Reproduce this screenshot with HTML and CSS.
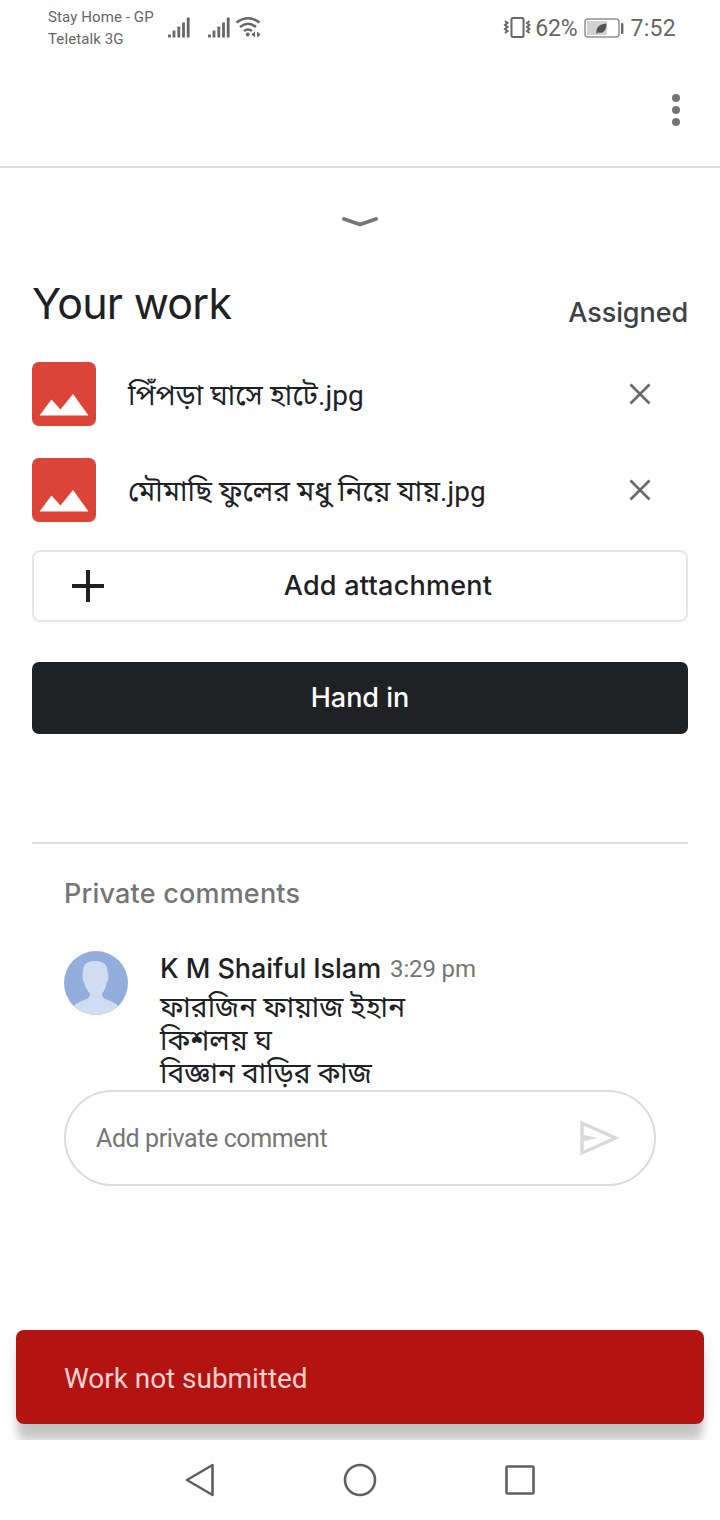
FILE: index.html
```html
<!DOCTYPE html>
<html lang="en">
<head>
<meta charset="utf-8">
<title>Your work</title>
<link rel="stylesheet" href="styles.css">
</head>
<body>
<div class="screen">
  <header class="status">
    <div class="carriers"><span class="carrier-a">Stay Home - GP</span><span class="carrier-b">Teletalk 3G</span></div>
    <svg class="signals" width="98" height="26" viewBox="0 0 98 26" fill="none" stroke="#666" stroke-width="2.800">
      <path d="M3.500 23.500v-3M8 23.500v-7M12.800 23.500v-11M17.500 23.500v-15M22.200 23.500v-20M43.500 23.500v-3M48 23.500v-7M52.800 23.500v-11M57.500 23.500v-15M62.200 23.500v-20"/>
      <path stroke-width="2.500" d="M70.500 8.500q11.500-8.500 23 0M74 13q8-6.500 16 0M78 17q4-3 8 0"/>
      <circle cx="81.700" cy="20.500" r="1.900" fill="#666" stroke="none"/>
      <path d="M89 17.500v6l-3.600-3zM91 17.500v6l3.600-3z" fill="#666" stroke="none"/>
    </svg>
    <div class="device">
      <svg width="28" height="24" viewBox="0 0 28 24" fill="none" stroke="#666" stroke-width="2">
        <rect x="8.500" y="2" width="12" height="19" rx="1.500"/>
        <path d="M2 5l2.500 2L2 9l2.500 2L2 13l2.500 2L2 17M26.500 5L24 7l2.500 2-2.500 2 2.500 2-2.500 2 2.500 2"/>
      </svg>
      <span class="percent">62%</span>
      <svg class="battery" width="40" height="20" viewBox="0 0 40 20">
        <rect x="1" y="1" width="34" height="18" rx="3" fill="#fff" stroke="#929292" stroke-width="1.500"/>
        <rect x="3" y="3" width="20" height="14" fill="#d2d2d2"/>
        <path d="M12.500 14.500C12 8 17 6 22.500 5.500 22.500 12 19.500 16 14.500 14.500L12.500 16z" fill="#555"/>
        <rect x="37" y="5" width="2.400" height="11" rx="1" fill="#666"/>
      </svg>
      <span class="clock">7:52</span>
    </div>
  </header>
  <div class="toolbar">
    <svg width="8" height="32" viewBox="0 0 8 32" fill="#757575"><circle cx="4" cy="4" r="4"/><circle cx="4" cy="16" r="4"/><circle cx="4" cy="28" r="4"/></svg>
  </div>
  <main class="sheet">
    <svg class="handle" width="40" height="14" viewBox="0 0 40 14" fill="none" stroke="#757575" stroke-width="3.800" stroke-linecap="round" stroke-linejoin="round"><path d="M4 5l16 5.500L36 5"/></svg>
    <div class="heading"><h1>Your work</h1><span class="state">Assigned</span></div>
    <ul class="files">
      <li>
        <svg class="thumb" width="64" height="64" viewBox="0 0 64 64"><rect width="64" height="64" rx="7" fill="#db4437"/><path d="M7.500 53.500l12-16 9 10L41 32l15.500 21.500z" fill="#fff"/></svg>
        <span class="name name-a">পিঁপড়া ঘাসে হাটে.jpg</span>
        <svg class="remove" width="22" height="22" viewBox="0 0 22 22" stroke="#6a6a6a" stroke-width="2.600"><path d="M1.500 1.500l19 19M20.500 1.500l-19 19"/></svg>
      </li>
      <li>
        <svg class="thumb" width="64" height="64" viewBox="0 0 64 64"><rect width="64" height="64" rx="7" fill="#db4437"/><path d="M7.500 53.500l12-16 9 10L41 32l15.500 21.500z" fill="#fff"/></svg>
        <span class="name name-b">মৌমাছি ফুলের মধু নিয়ে যায়.jpg</span>
        <svg class="remove" width="22" height="22" viewBox="0 0 22 22" stroke="#6a6a6a" stroke-width="2.600"><path d="M1.500 1.500l19 19M20.500 1.500l-19 19"/></svg>
      </li>
    </ul>
    <div class="add">
      <svg width="32" height="32" viewBox="0 0 32 32" stroke="#202124" stroke-width="4"><path d="M0 16h32M16 0v32"/></svg>
      <span class="add-label">Add attachment</span>
    </div>
    <div class="handin"><span>Hand in</span></div>
    <section class="comments">
      <h2>Private comments</h2>
      <div class="comment">
        <svg width="64" height="64" viewBox="0 0 64 64">
          <defs><clipPath id="disc"><circle cx="32" cy="32" r="32"/></clipPath></defs>
          <g clip-path="url(#disc)"><rect width="64" height="64" fill="#93aedd"/>
          <path d="M31 10c-9 0-12 4-12 11-1 3-.5 9 1.500 11 .5 4 3 8 5.500 10.500 0 4-2 5-6 6.500-5 2-8 3.500-11 6.500V64h46v-8.500c-3-3-6-4.500-11-6.500-4-1.500-6-2.500-6-6.500 2.500-2.500 4-6.500 4.500-10.500 2-2 2.500-8 1-11C43.500 14 40 10 31 10z" fill="#d0dcf2"/></g>
        </svg>
        <div class="comment-text">
          <div class="byline"><span class="author">K M Shaiful Islam</span><span class="time">3:29 pm</span></div>
          <p><span class="line">ফারজিন ফায়াজ ইহান</span><span class="line">কিশলয় ঘ</span><span class="line">বিজ্ঞান বাড়ির কাজ</span></p>
        </div>
      </div>
      <div class="entry">
        <span>Add private comment</span>
        <svg width="40" height="36" viewBox="0 0 40 36" fill="none" stroke="#d9d9d9" stroke-width="3.400"><path d="M2 3v30l33.500-15z"/><path d="M2 14.500L18 18 2 21.500z" fill="#d9d9d9" stroke="none"/></svg>
      </div>
    </section>
    <div class="snackbar"><span>Work not submitted</span></div>
  </main>
  <nav class="nav">
    <svg width="34" height="36" viewBox="0 0 34 36"><path d="M4 18L29.500 3v30z"/></svg>
    <svg width="34" height="36" viewBox="0 0 34 36"><circle cx="17" cy="18" r="15"/></svg>
    <svg width="34" height="36" viewBox="0 0 34 36"><rect x="3.500" y="4.500" width="27" height="27" rx="1"/></svg>
  </nav>
</div>
</body>
</html>
```

FILE: styles.css
```css
* { box-sizing: border-box; }
body { margin: 0; background: #fff; color: #202124; font-family: Roboto, "Noto Sans Bengali", "Noto Sans", sans-serif; }
h1, h2, p, ul { margin: 0; padding: 0; font-weight: 400; }
svg { display: block; flex: none; }
span { white-space: nowrap; }
.screen { width: 720px; height: 1520px; display: flex; flex-direction: column; overflow: hidden; }
.status { height: 56px; padding: 6px 44px 0 48px; display: flex; align-items: flex-start; color: #666; }
.carriers { display: flex; flex-direction: column; width: 118px; font-size: 15px; line-height: 22px; letter-spacing: 0.1px; }
.signals { margin-top: 8px; }
.device { margin-left: auto; display: flex; align-items: center; height: 44px; font-size: 23px; }
.percent { margin-left: 4px; letter-spacing: -0.2px; }
.battery { margin: 0 6px 0 7px; }
.clock { letter-spacing: 0.3px; }
.toolbar { height: 112px; padding: 38px 40px 0 0; display: flex; justify-content: flex-end; border-bottom: 2px solid #dedede; }
.sheet { height: 1272px; padding: 46px 32px 0; display: flex; flex-direction: column; overflow: hidden; }
.handle { align-self: center; }
.heading { height: 134px; padding-top: 44px; display: flex; justify-content: space-between; }
h1 { font-family: Inter, sans-serif; font-size: 43px; line-height: 62px; letter-spacing: -0.75px; }
.state { font: 500 27px/34px Inter, sans-serif; margin-top: 24px; letter-spacing: -0.1px; color: #404144; }
.files { list-style: none; display: flex; flex-direction: column; gap: 32px; }
.files li { display: flex; align-items: center; height: 64px; padding-right: 37px; }
.name { margin-left: 32px; padding-top: 4px; font-size: 28px; line-height: 40px; letter-spacing: 0.1px; }
.remove { margin-left: auto; }
.add { height: 72px; margin-top: 28px; border: 2px solid #e6e6e6; border-radius: 8px; padding-left: 38px; display: flex; align-items: center; }
.add-label { flex: 1; text-align: center; padding-right: 14px; font: 500 27px/36px Inter, sans-serif; letter-spacing: 0.25px; }
.handin { height: 72px; margin-top: 40px; border-radius: 7px; background: #202124; color: #fff; display: flex; align-items: center; justify-content: center; font: 500 27px/36px Inter, sans-serif; }
.comments { margin-top: 108px; border-top: 2px solid #dedede; padding: 32px 32px 0; }
h2 { font: 500 27px/36px Inter, sans-serif; letter-spacing: 0.2px; color: #757575; }
.comment { margin-top: 38px; display: flex; gap: 32px; height: 140px; padding-top: 1px; }
.byline { display: flex; align-items: center; gap: 9px; height: 36px; }
.author { font: 500 27px/36px Inter, sans-serif; letter-spacing: -0.05px; }
.time { font-size: 24px; letter-spacing: -0.15px; color: #757575; }
.comment p { display: flex; flex-direction: column; align-items: flex-start; padding-top: 4px; }
.line { font-size: 28px; line-height: 33px; letter-spacing: 0.1px; }
.entry { width: 592px; height: 96px; border: 2px solid #dcdcdc; border-radius: 48px; padding: 0 34px 0 30px; display: flex; align-items: center; justify-content: space-between; font-size: 25px; letter-spacing: -0.4px; color: #757575; }
.entry span { padding-top: 1px; }
.snackbar { height: 94px; margin: 144px -16px 0; padding: 2px 0 0 48px; display: flex; align-items: center; flex: none; border-radius: 8px; background: #b31412; color: #fad2cf; font-size: 28px; letter-spacing: -0.05px; box-shadow: 0 8px 14px rgba(0,0,0,.1), 0 20px 8px -2px rgba(0,0,0,.17); }
.nav { height: 80px; display: flex; justify-content: center; align-items: center; gap: 126px; background: #fff; }
.nav svg { fill: none; stroke: #5f6060; stroke-width: 2.6; stroke-linejoin: round; }
```
